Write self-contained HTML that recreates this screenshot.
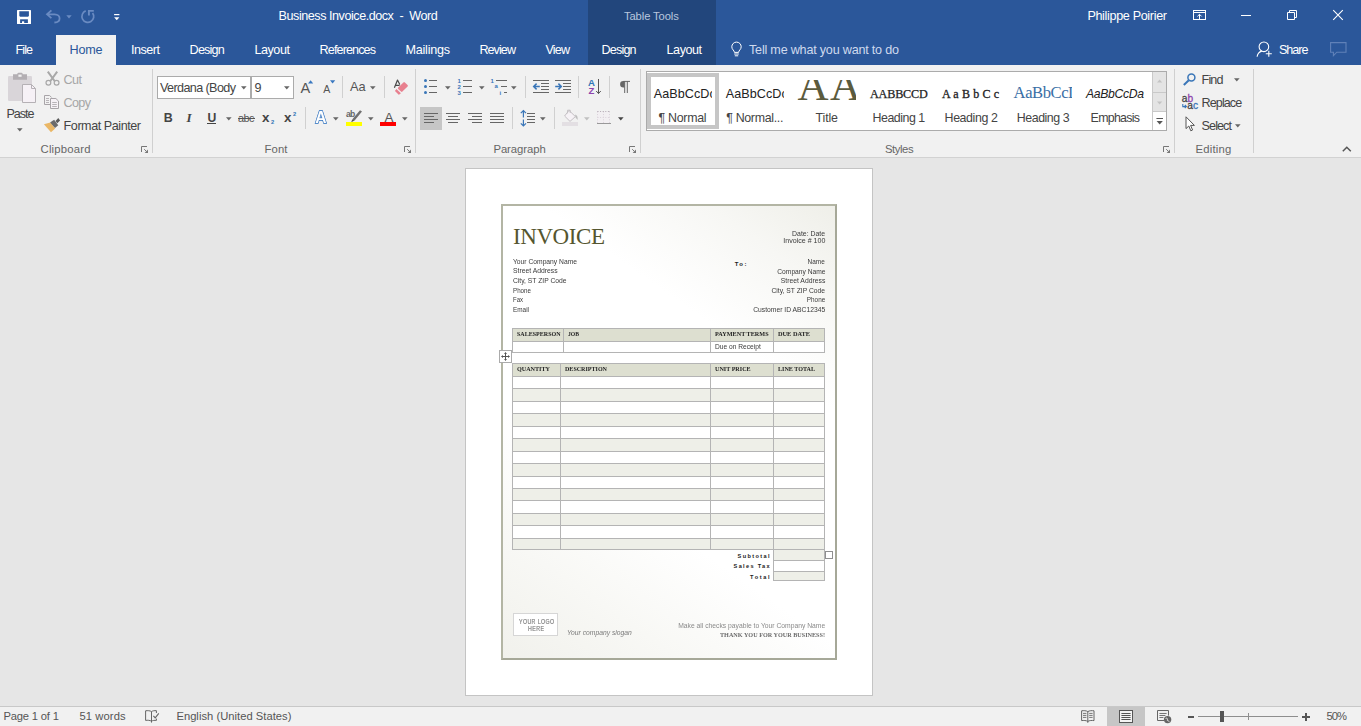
<!DOCTYPE html>
<html>
<head>
<meta charset="utf-8">
<title>Business Invoice.docx - Word</title>
<style>
*{box-sizing:border-box;margin:0;padding:0}
html,body{width:1361px;height:726px;overflow:hidden;background:#e6e6e6;font-family:"Liberation Sans",sans-serif;}
.abs{position:absolute}
#app{position:relative;width:1361px;height:726px;overflow:hidden;background:#e6e6e6}
#blue{position:absolute;left:0;top:0;width:1361px;height:65px;background:#2b579a}
#tt{position:absolute;left:588px;top:0;width:128px;height:65px;background:#22467c}
.t{position:absolute;white-space:nowrap;line-height:1}
.tw{color:#fff;font-size:12.6px}
#hometab{position:absolute;left:56px;top:35px;width:60px;height:31px;background:#f1f1f1}
#ribbon{position:absolute;left:0;top:65px;width:1361px;height:92px;background:#f1f1f1}
#ribline{position:absolute;left:0;top:157px;width:1361px;height:1px;background:#d2d2d2}
.sep{position:absolute;top:72px;width:1px;height:78px;background:#d5d5d5}
.rl{color:#444;font-size:12.2px}
.rg{color:#a0a0a0;font-size:12.2px}
.gl{color:#5a5a5a;font-size:11.6px}
svg{position:absolute;overflow:visible}
#status{position:absolute;left:0;top:706px;width:1361px;height:20px;background:#f1f1f1;border-top:1px solid #c8c8c8}
.st{color:#555;font-size:11.2px}
/* document */
#page{position:absolute;left:465px;top:168px;width:408px;height:528px;background:#fff;border:1px solid #c4c4c4}
#inv{position:absolute;left:501px;top:204px;width:336px;height:456px;border:2px solid #b3b5a4;border-right-color:#a6a898;border-bottom-color:#a6a898;background:linear-gradient(215deg,#efefe9 0%,#f7f7f4 13%,#ffffff 30%,#ffffff 64%,#f8f8f5 82%,#f1f1ec 100%)}
.v{position:absolute;white-space:nowrap;line-height:1;font-size:5.4px;color:#333;font-family:"Liberation Sans",sans-serif}
.vr{text-align:right}
.h{position:absolute;white-space:nowrap;line-height:1;font-size:4.6px;color:#222;font-family:"Liberation Serif",serif;font-weight:bold;letter-spacing:.1px}
</style>
</head>
<body>
<div id="app">
<div id="blue"></div>
<div id="tt"></div>
<div id="hometab"></div>
<div id="ribbon"></div>
<div id="ribline"></div>
<div class="t" style="left:278.60px;top:10.00px;letter-spacing:-0.464px;font-size:12.6px;color:#fff;white-space:pre">Business Invoice.docx  -  Word</div>
<div class="t" style="left:624.00px;top:11.00px;letter-spacing:-0.097px;font-size:11.2px;color:#b9c6de">Table Tools</div>
<div class="t" style="left:1087.40px;top:10.00px;letter-spacing:-0.340px;font-size:12.6px;color:#fff">Philippe Poirier</div>
<div class="t" style="left:15.60px;top:44.00px;letter-spacing:-0.966px;font-size:12.6px;color:#fff">File</div>
<div class="t" style="left:69.60px;top:44.00px;letter-spacing:-0.265px;font-size:12.6px;color:#2b579a">Home</div>
<div class="t" style="left:131.00px;top:44.00px;letter-spacing:-0.500px;font-size:12.6px;color:#fff">Insert</div>
<div class="t" style="left:189.60px;top:44.00px;letter-spacing:-0.801px;font-size:12.6px;color:#fff">Design</div>
<div class="t" style="left:254.40px;top:44.00px;letter-spacing:-0.443px;font-size:12.6px;color:#fff">Layout</div>
<div class="t" style="left:319.60px;top:44.00px;letter-spacing:-0.890px;font-size:12.6px;color:#fff">References</div>
<div class="t" style="left:405.60px;top:44.00px;letter-spacing:-0.258px;font-size:12.6px;color:#fff">Mailings</div>
<div class="t" style="left:479.40px;top:44.00px;letter-spacing:-0.939px;font-size:12.6px;color:#fff">Review</div>
<div class="t" style="left:545.40px;top:44.00px;letter-spacing:-0.826px;font-size:12.6px;color:#fff">View</div>
<div class="t" style="left:601.40px;top:44.00px;letter-spacing:-0.801px;font-size:12.6px;color:#fff">Design</div>
<div class="t" style="left:666.60px;top:44.00px;letter-spacing:-0.483px;font-size:12.6px;color:#fff">Layout</div>
<div class="t" style="left:749.00px;top:44.00px;letter-spacing:-0.208px;font-size:12.6px;color:#cfdaee">Tell me what you want to do</div>
<div class="t" style="left:1279.00px;top:44.00px;letter-spacing:-1.052px;font-size:12.6px;color:#fff">Share</div>

<!-- save -->
<svg style="left:17px;top:10px" width="14" height="14" viewBox="0 0 14 14"><rect x="0" y="0" width="14" height="14" rx="0.6" fill="#fff"/><path d="M2.3 1.3h9.6v4.6l-0.9 0.9h-7.8l-0.9 -0.9z" fill="#2b579a"/><rect x="3.1" y="9.3" width="7.8" height="3.7" fill="#2b579a"/><rect x="5" y="11.3" width="2.2" height="1.8" fill="#fff"/></svg>
<!-- undo -->
<svg style="left:45px;top:9px" width="16" height="15" viewBox="0 0 16 15"><path d="M6.4 1.3 L2 5.3 L6.4 9.2 M2.2 5.3 H9.6 C13 5.3 14.6 7.4 14.6 9.4 C14.6 11.8 12.2 13.3 9.4 13.5" fill="none" stroke="#6a8bc2" stroke-width="1.8"/></svg>
<svg style="left:66px;top:14.6px" width="6" height="4" viewBox="0 0 6 4"><path d="M0.3 0.3h5.4L3 3.4z" fill="#6a8bc2"/></svg>
<!-- redo -->
<svg style="left:81px;top:9px" width="14" height="15" viewBox="0 0 14 15"><path d="M11.6 3.9 A5.9 5.9 0 1 1 4.7 1.9" fill="none" stroke="#6a8bc2" stroke-width="1.7"/><path d="M12.8 1.9 H7.9 V6.6" fill="none" stroke="#6a8bc2" stroke-width="1.9"/></svg>
<!-- customize -->
<svg style="left:113.8px;top:13.8px" width="6" height="7" viewBox="0 0 6 7"><rect x="0.1" y="0" width="5.3" height="1.2" fill="#fff"/><path d="M0.1 3.2h5.3L2.75 6.3z" fill="#fff"/></svg>
<!-- ribbon display options -->
<svg style="left:1193px;top:10px" width="13" height="10" viewBox="0 0 13 10"><rect x="0.5" y="0.5" width="12" height="9" fill="none" stroke="#fff" stroke-width="1"/><path d="M0.5 2.5H12.5" stroke="#fff" stroke-width="1"/><path d="M6.5 4.4V9M4.4 6.4L6.5 4.3L8.6 6.4" fill="none" stroke="#fff" stroke-width="1"/></svg>
<!-- minimize -->
<div class="abs" style="left:1241px;top:15px;width:10px;height:1px;background:#fff"></div>
<!-- restore -->
<svg style="left:1287px;top:10px" width="10" height="10" viewBox="0 0 10 10"><path d="M0.5 2.5h7v7h-7z M2.5 2.5v-2h7v7h-2" fill="none" stroke="#fff" stroke-width="1"/></svg>
<!-- close -->
<svg style="left:1333px;top:10px" width="10" height="10" viewBox="0 0 10 10"><path d="M0.2 0.2L9.8 9.8M9.8 0.2L0.2 9.8" stroke="#fff" stroke-width="1.1" fill="none"/></svg>
<!-- bulb -->
<svg style="left:731px;top:42px" width="11" height="15" viewBox="0 0 11 15"><path d="M3.4 10.4 C3.4 8.4 0.8 7.6 0.8 4.8 A4.7 4.7 0 0 1 10.2 4.8 C10.2 7.6 7.6 8.4 7.6 10.4 Z" fill="none" stroke="#fff" stroke-width="1"/><path d="M3.2 12h4.6M3.8 13.8h3.4" stroke="#fff" stroke-width="1" fill="none"/></svg>
<!-- share -->
<svg style="left:1256px;top:41px" width="17" height="17" viewBox="0 0 17 17"><circle cx="7.9" cy="5.8" r="4.8" fill="none" stroke="#fff" stroke-width="1.1"/><path d="M1.1 15.8 C1.5 12.8 3.4 10.8 5.8 10.1" fill="none" stroke="#fff" stroke-width="1.1"/><path d="M9.8 12.7h6M12.8 9.7v6" stroke="#fff" stroke-width="1.1" fill="none"/></svg>
<!-- comment -->
<svg style="left:1330px;top:42px" width="17" height="15" viewBox="0 0 17 15"><path d="M0.6 0.6h15.4v9.6h-9.2l-3.4 3.4v-3.4h-2.8z" fill="none" stroke="#6081b8" stroke-width="1.1"/></svg>

<div class="abs" style="left:152px;top:69px;width:1px;height:84px;background:#d0d0d0"></div><div class="abs" style="left:415px;top:69px;width:1px;height:84px;background:#d0d0d0"></div><div class="abs" style="left:640px;top:69px;width:1px;height:84px;background:#d0d0d0"></div><div class="abs" style="left:1174px;top:69px;width:1px;height:84px;background:#d0d0d0"></div><div class="abs" style="left:1253px;top:69px;width:1px;height:84px;background:#d0d0d0"></div><div class="abs" style="left:342px;top:76px;width:1px;height:22px;background:#d0d0d0"></div><div class="abs" style="left:384px;top:76px;width:1px;height:22px;background:#d0d0d0"></div><div class="abs" style="left:305px;top:107px;width:1px;height:22px;background:#d0d0d0"></div><div class="abs" style="left:157px;top:76px;width:94px;height:23px;background:#fff;border:1px solid #ababab"></div><div class="abs" style="left:251px;top:76px;width:43px;height:23px;background:#fff;border:1px solid #ababab"></div>
<div class="t" style="left:6.50px;top:108.00px;letter-spacing:-1.080px;font-size:12.6px;color:#444">Paste</div>
<div class="t" style="left:63.60px;top:74.00px;letter-spacing:-0.605px;font-size:12.6px;color:#a6a6a6">Cut</div>
<div class="t" style="left:63.60px;top:97.00px;letter-spacing:-0.669px;font-size:12.6px;color:#a6a6a6">Copy</div>
<div class="t" style="left:63.60px;top:120.00px;letter-spacing:-0.454px;font-size:12.6px;color:#444">Format Painter</div>
<div class="t" style="left:40.50px;top:144.00px;letter-spacing:0.218px;font-size:11.3px;color:#666">Clipboard</div>
<div class="t" style="left:264.60px;top:144.00px;letter-spacing:0.064px;font-size:11.3px;color:#666">Font</div>
<div class="t" style="left:160.00px;top:82.00px;letter-spacing:-0.611px;font-size:12.6px;color:#444">Verdana (Body</div>
<div class="t" style="left:254.60px;top:82.00px;font-size:12.6px;color:#444">9</div>
<div class="t" style="left:300.40px;top:81.00px;font-size:14.6px;color:#555">A</div>
<div class="t" style="left:323.20px;top:84.00px;font-size:10.6px;color:#555">A</div>
<div class="t" style="left:350.00px;top:81.00px;letter-spacing:-0.056px;font-size:12.8px;color:#555">Aa</div>
<div class="t" style="left:163.80px;top:112.00px;font-size:12.4px;color:#444;font-weight:bold">B</div>
<div class="t" style="left:186.60px;top:111.00px;font-size:13px;color:#444;font-family:'Liberation Serif',serif;font-weight:bold;font-style:italic">I</div>
<div class="t" style="left:207.40px;top:112.00px;font-size:12.2px;color:#444;font-weight:bold">U</div>
<div class="t" style="left:238.00px;top:113.00px;letter-spacing:-0.511px;font-size:10.8px;color:#555">abc</div>
<div class="t" style="left:262.00px;top:111.00px;font-size:13.4px;color:#444;font-weight:bold">x</div>
<div class="t" style="left:284.00px;top:111.00px;font-size:13.4px;color:#444;font-weight:bold">x</div>
<div class="t" style="left:271.00px;top:120.00px;font-size:5.8px;color:#2e75b6;font-weight:bold">2</div>
<div class="t" style="left:293.00px;top:112.00px;font-size:5.8px;color:#2e75b6;font-weight:bold">2</div>
<div class="t" style="left:384.40px;top:111.00px;font-size:13.4px;color:#555">A</div>
<div class="t" style="left:346.00px;top:110.00px;letter-spacing:-0.831px;font-size:8.6px;color:#666;font-weight:bold">ab</div>
<svg style="left:8px;top:73px" width="29" height="30" viewBox="0 0 29 30"><rect x="0" y="3" width="24" height="25" rx="1.2" fill="#d9d5d9"/><path d="M5 1.2h4.2c0-0.8 0.8-1.4 1.8-1.4h2c1 0 1.8 0.6 1.8 1.4H19v5.6H5z" fill="#b3afb3"/><rect x="10.4" y="1.6" width="3.2" height="2.2" fill="#f1f1f1"/><path d="M14.5 11.5h9l4 4v14h-13z" fill="#f6f1f6" stroke="#b5b1b5" stroke-width="1"/><path d="M23.5 11.5v4h4" fill="none" stroke="#b5b1b5" stroke-width="1"/></svg><svg style="left:17px;top:128px" width="6" height="4" viewBox="0 0 6 4"><path d="M0 0.2h5.6L2.8 3.4z" fill="#666"/></svg><svg style="left:45px;top:71px" width="15" height="15" viewBox="0 0 15 15"><path d="M2.8 0.6L9.6 10M12.2 0.6L5.4 10" stroke="#a8a8a8" stroke-width="2" fill="none"/><circle cx="3.4" cy="11.8" r="2.4" fill="none" stroke="#a8a8a8" stroke-width="1.2"/><circle cx="11.6" cy="11.8" r="2.4" fill="none" stroke="#a8a8a8" stroke-width="1.2"/></svg><svg style="left:44px;top:95px" width="16" height="14" viewBox="0 0 16 14"><path d="M6 9.5H0.5V0.5H5.6L7.6 2.5" fill="none" stroke="#a8a4a8" stroke-width="1"/><path d="M2 3.5h3M2 5.5h3M2 7.5h3" stroke="#b8b4b8" stroke-width="1"/><path d="M6.5 3.5h5.4l2.6 2.6v7.4h-8z" fill="#f6f1f6" stroke="#a8a4a8" stroke-width="1"/><path d="M8.2 7.5h4.6M8.2 9.5h4.6M8.2 11.5h4.6" stroke="#b8b4b8" stroke-width="1"/></svg><svg style="left:40px;top:68px" width="24" height="68" viewBox="0 0 24 68"><path d="M3.9 56.2L10.3 54.6L15.2 60.6L11 64.3z" fill="#eab766"/><path d="M10.1 54.4L14.1 51.7L18.3 57.2L15 60z" fill="#6b6b6b"/><path d="M15.5 53L18.3 50.1L20.1 52.5L17.3 55.3z" fill="#5a5a5a"/></svg><svg style="left:141px;top:146px" width="8" height="8" viewBox="0 0 8 8"><path d="M0.5 6V0.5H6" fill="none" stroke="#777" stroke-width="1"/><path d="M7 3.6V7H3.6z" fill="#777"/><path d="M3.2 3.2L5.4 5.4" stroke="#777" stroke-width="1" fill="none"/></svg><svg style="left:404px;top:146px" width="8" height="8" viewBox="0 0 8 8"><path d="M0.5 6V0.5H6" fill="none" stroke="#777" stroke-width="1"/><path d="M7 3.6V7H3.6z" fill="#777"/><path d="M3.2 3.2L5.4 5.4" stroke="#777" stroke-width="1" fill="none"/></svg><svg style="left:241px;top:86px" width="6" height="4" viewBox="0 0 6 4"><path d="M0 0.2h5.6L2.8 3.4z" fill="#666"/></svg><svg style="left:284.4px;top:86px" width="6" height="4" viewBox="0 0 6 4"><path d="M0 0.2h5.6L2.8 3.4z" fill="#666"/></svg><svg style="left:308px;top:80px" width="6" height="4" viewBox="0 0 6 4"><path d="M0 3.4h5.2L2.6 0.2z" fill="#3a78c0"/></svg><svg style="left:330px;top:80px" width="6" height="4" viewBox="0 0 6 4"><path d="M0 0.2h5.2L2.6 3.4z" fill="#3a78c0"/></svg><svg style="left:370px;top:86px" width="6" height="4" viewBox="0 0 6 4"><path d="M0 0.2h5.6L2.8 3.4z" fill="#666"/></svg><svg style="left:386px;top:74px" width="28" height="26" viewBox="0 0 28 26"><path d="M8.4 13.8L11.5 6L13.8 10.6M9.6 11.4H13.6" fill="none" stroke="#4a4a4a" stroke-width="1.2" stroke-linejoin="round"/><path d="M12.2 13.6L17.4 8.4Q18.1 7.8 18.8 8.4L21.6 11Q22.2 11.7 21.6 12.4L16.4 17.6Q15.7 18.2 15 17.6L12.2 15Q11.6 14.3 12.2 13.6z" fill="#e8808f"/><path d="M10.4 15L14.9 19.3L13.3 20.6Q12.9 20.9 12.5 20.5L9.2 17.2Q8.9 16.8 9.2 16.4z" fill="#e8808f"/></svg><div class="abs" style="left:207px;top:123px;width:9px;height:1px;background:#444"></div><svg style="left:226px;top:117px" width="6" height="4" viewBox="0 0 6 4"><path d="M0 0.2h5.6L2.8 3.4z" fill="#666"/></svg><div class="abs" style="left:238px;top:118px;width:17px;height:1px;background:#555"></div><div class="t" style="left:315.2px;top:110px;font-size:15.6px;font-weight:bold;color:#fff;-webkit-text-stroke:1.3px #3a78c0;paint-order:stroke fill;filter:drop-shadow(0 0 0.7px #9dbfe6)">A</div><svg style="left:333px;top:117px" width="6" height="4" viewBox="0 0 6 4"><path d="M0 0.2h5.6L2.8 3.4z" fill="#666"/></svg><svg style="left:346px;top:110px" width="17" height="17" viewBox="0 0 17 17"><path d="M16 1.6L8.6 10.4L6 11.8L6.6 9L14 0.2z" fill="#707070"/><path d="M6.4 9.4L5 11.9L8 10.8z" fill="#555"/><rect x="0" y="12" width="16" height="4" fill="#ffff00"/></svg><svg style="left:368px;top:117px" width="6" height="4" viewBox="0 0 6 4"><path d="M0 0.2h5.6L2.8 3.4z" fill="#666"/></svg><div class="abs" style="left:380px;top:122px;width:16px;height:4px;background:#fe0000"></div><svg style="left:402px;top:117px" width="6" height="4" viewBox="0 0 6 4"><path d="M0 0.2h5.6L2.8 3.4z" fill="#666"/></svg>
<div class="abs" style="left:420px;top:107px;width:22px;height:23px;background:#c6c6c6"></div>
<div class="t" style="left:493.40px;top:144.00px;letter-spacing:-0.046px;font-size:11.3px;color:#666">Paragraph</div>
<div class="t" style="left:588.00px;top:78.00px;font-size:9.6px;color:#2e75b6;font-weight:bold">A</div>
<div class="t" style="left:588.40px;top:86.00px;font-size:9.6px;color:#8e44ad;font-weight:bold">Z</div>
<div class="abs" style="left:525px;top:76px;width:1px;height:22px;background:#d0d0d0"></div><div class="abs" style="left:578px;top:76px;width:1px;height:22px;background:#d0d0d0"></div><div class="abs" style="left:609px;top:76px;width:1px;height:22px;background:#d0d0d0"></div><div class="abs" style="left:512px;top:107px;width:1px;height:22px;background:#d0d0d0"></div><div class="abs" style="left:554px;top:107px;width:1px;height:22px;background:#d0d0d0"></div><div class="abs" style="left:424px;top:79px;width:3px;height:3px;border-radius:1.5px;background:#3a76b8"></div><div class="abs" style="left:429px;top:80px;width:8px;height:1px;background:#666"></div><div class="abs" style="left:424px;top:85px;width:3px;height:3px;border-radius:1.5px;background:#3a76b8"></div><div class="abs" style="left:429px;top:86px;width:8px;height:1px;background:#666"></div><div class="abs" style="left:424px;top:91px;width:3px;height:3px;border-radius:1.5px;background:#3a76b8"></div><div class="abs" style="left:429px;top:92px;width:8px;height:1px;background:#666"></div><svg style="left:445px;top:86px" width="6" height="4" viewBox="0 0 6 4"><path d="M0 0.2h5.6L2.8 3.4z" fill="#666"/></svg><div class="t" style="left:457.6px;top:77.8px;font-size:6px;font-weight:bold;color:#3a76b8">1</div><div class="abs" style="left:463px;top:80px;width:9px;height:1px;background:#666"></div><div class="t" style="left:457.6px;top:83.8px;font-size:6px;font-weight:bold;color:#3a76b8">2</div><div class="abs" style="left:463px;top:86px;width:9px;height:1px;background:#666"></div><div class="t" style="left:457.6px;top:89.8px;font-size:6px;font-weight:bold;color:#3a76b8">3</div><div class="abs" style="left:463px;top:92px;width:9px;height:1px;background:#666"></div><svg style="left:479px;top:86px" width="6" height="4" viewBox="0 0 6 4"><path d="M0 0.2h5.6L2.8 3.4z" fill="#666"/></svg><div class="t" style="left:490.6px;top:77.8px;font-size:6px;font-weight:bold;color:#3a76b8">1</div><div class="abs" style="left:496px;top:80px;width:11px;height:1px;background:#666"></div><div class="t" style="left:494.6px;top:83.4px;font-size:6px;font-weight:bold;color:#3a76b8">a</div><div class="abs" style="left:501px;top:86px;width:6px;height:1px;background:#666"></div><div class="t" style="left:499.6px;top:89.6px;font-size:6px;font-weight:bold;color:#3a76b8">i</div><div class="abs" style="left:504px;top:92px;width:3px;height:1px;background:#666"></div><svg style="left:511px;top:86px" width="6" height="4" viewBox="0 0 6 4"><path d="M0 0.2h5.6L2.8 3.4z" fill="#666"/></svg><div class="abs" style="left:533px;top:80px;width:16px;height:1px;background:#666"></div><div class="abs" style="left:533px;top:92px;width:16px;height:1px;background:#666"></div><div class="abs" style="left:541px;top:83px;width:8px;height:1px;background:#666"></div><div class="abs" style="left:541px;top:86px;width:8px;height:1px;background:#666"></div><div class="abs" style="left:541px;top:89px;width:8px;height:1px;background:#666"></div><svg style="left:533px;top:83px" width="7" height="7" viewBox="0 0 7 7"><path d="M6.8 3.5H1.2M3.6 0.6L0.7 3.5L3.6 6.4" fill="none" stroke="#3a76b8" stroke-width="1.5"/></svg><div class="abs" style="left:555px;top:80px;width:16px;height:1px;background:#666"></div><div class="abs" style="left:555px;top:92px;width:16px;height:1px;background:#666"></div><div class="abs" style="left:563px;top:83px;width:8px;height:1px;background:#666"></div><div class="abs" style="left:563px;top:86px;width:8px;height:1px;background:#666"></div><div class="abs" style="left:563px;top:89px;width:8px;height:1px;background:#666"></div><svg style="left:555px;top:83px" width="7" height="7" viewBox="0 0 7 7"><path d="M0.2 3.5H5.8M3.4 0.6L6.3 3.5L3.4 6.4" fill="none" stroke="#3a76b8" stroke-width="1.5"/></svg><svg style="left:596px;top:79px" width="6" height="16" viewBox="0 0 6 16"><path d="M2.5 0V14.6M0.2 12L2.5 14.6L4.8 12" fill="none" stroke="#555" stroke-width="1"/></svg><svg style="left:619px;top:80px" width="12" height="14" viewBox="0 0 12 14"><path d="M5.6 1H4.4A3.3 3.3 0 0 0 4.4 7.6H5.6z" fill="#666"/><path d="M5.7 1V13M8.3 1V13M4.4 1.4H11" stroke="#666" stroke-width="1" fill="none"/></svg><div class="abs" style="left:424px;top:113px;width:14px;height:1px;background:#666"></div><div class="abs" style="left:424px;top:116px;width:10px;height:1px;background:#666"></div><div class="abs" style="left:424px;top:119px;width:14px;height:1px;background:#666"></div><div class="abs" style="left:424px;top:122px;width:10px;height:1px;background:#666"></div><div class="abs" style="left:446px;top:113px;width:14px;height:1px;background:#666"></div><div class="abs" style="left:448px;top:116px;width:10px;height:1px;background:#666"></div><div class="abs" style="left:446px;top:119px;width:14px;height:1px;background:#666"></div><div class="abs" style="left:448px;top:122px;width:10px;height:1px;background:#666"></div><div class="abs" style="left:468px;top:113px;width:14px;height:1px;background:#666"></div><div class="abs" style="left:472px;top:116px;width:10px;height:1px;background:#666"></div><div class="abs" style="left:468px;top:119px;width:14px;height:1px;background:#666"></div><div class="abs" style="left:472px;top:122px;width:10px;height:1px;background:#666"></div><div class="abs" style="left:490px;top:113px;width:14px;height:1px;background:#666"></div><div class="abs" style="left:490px;top:116px;width:14px;height:1px;background:#666"></div><div class="abs" style="left:490px;top:119px;width:14px;height:1px;background:#666"></div><div class="abs" style="left:490px;top:122px;width:14px;height:1px;background:#666"></div><svg style="left:520px;top:110px" width="7" height="17" viewBox="0 0 7 17"><path d="M3.4 0.6V7.4M0.8 3.2L3.4 0.6L6 3.2M3.4 9.4V16M0.8 13.4L3.4 16L6 13.4" fill="none" stroke="#3a76b8" stroke-width="1.2"/></svg><div class="abs" style="left:527px;top:113px;width:8px;height:1px;background:#666"></div><div class="abs" style="left:527px;top:116px;width:8px;height:1px;background:#666"></div><div class="abs" style="left:527px;top:119px;width:8px;height:1px;background:#666"></div><div class="abs" style="left:527px;top:122px;width:8px;height:1px;background:#666"></div><svg style="left:540px;top:117px" width="6" height="4" viewBox="0 0 6 4"><path d="M0 0.2h5.6L2.8 3.4z" fill="#666"/></svg><svg style="left:562px;top:109px" width="17" height="18" viewBox="0 0 17 18"><path d="M7 1.4L13.4 7.6L8 12.4L2.6 7z" fill="#f6f2f6" stroke="#c4c0c4" stroke-width="1"/><path d="M5.6 4.4V1.2h2.6V4" fill="none" stroke="#c4c0c4" stroke-width="1"/><path d="M13 5.6C15.4 6.4 16 8.6 15.6 11L13.6 8.4z" fill="#bdbdbd"/><rect x="0" y="13" width="16" height="4" fill="#e3dfe3"/></svg><svg style="left:584px;top:117px" width="6" height="4" viewBox="0 0 6 4"><path d="M0 0.2h5.6L2.8 3.4z" fill="#c0c0c0"/></svg><svg style="left:597px;top:111px" width="14" height="14" viewBox="0 0 14 14"><path d="M0.5 0.5H13.5M0.5 6.5H13.5" stroke="#b4a8b4" stroke-width="1" stroke-dasharray="1 1.6" fill="none"/><path d="M0.5 0.5V12M6.5 0.5V12M12.5 0.5V12" stroke="#b4a8b4" stroke-width="1" stroke-dasharray="1 1.6" fill="none"/><rect x="0" y="1" width="13" height="11" fill="#f4eff4" opacity="0.6"/><rect x="0" y="12" width="14" height="1" fill="#999"/></svg><svg style="left:618px;top:117px" width="6" height="4" viewBox="0 0 6 4"><path d="M0 0.2h5.6L2.8 3.4z" fill="#444"/></svg><svg style="left:629px;top:146px" width="8" height="8" viewBox="0 0 8 8"><path d="M0.5 6V0.5H6" fill="none" stroke="#777" stroke-width="1"/><path d="M7 3.6V7H3.6z" fill="#777"/><path d="M3.2 3.2L5.4 5.4" stroke="#777" stroke-width="1" fill="none"/></svg>
<div class="abs" style="left:646px;top:71px;width:521px;height:60px;background:#fff;border:1px solid #ababab"></div><div class="abs" style="left:647px;top:73px;width:72px;height:56px;border:4px solid #c6c6c6;background:#fff"></div><div class="abs" style="left:1152px;top:72px;width:14px;height:58px;background:#fff;border-left:1px solid #c9c9c9"></div><div class="abs" style="left:1153px;top:72px;width:13px;height:20px;background:#e4e4e4"></div><div class="abs" style="left:1153px;top:93px;width:13px;height:18px;background:#e4e4e4"></div><div class="abs" style="left:1153px;top:92px;width:13px;height:1px;background:#c9c9c9"></div><div class="abs" style="left:1153px;top:111px;width:13px;height:1px;background:#c9c9c9"></div><div class="abs" style="left:651px;top:78px;width:61px;height:24px;overflow:hidden"><div class="t" style="left:2.8px;top:10px;font-size:12.6px;color:#222;letter-spacing:0.05px">AaBbCcDcEe</div></div><div class="abs" style="left:720px;top:78px;width:64px;height:24px;overflow:hidden"><div class="t" style="left:5.8px;top:10px;font-size:12.6px;color:#222;letter-spacing:0.05px">AaBbCcDcEe</div></div><div class="abs" style="left:797px;top:80px;width:59px;height:22px;overflow:hidden"><div class="t" style="left:0.4px;top:-16px;font-size:43px;color:#5b5b3e;font-family:'Liberation Serif',serif;letter-spacing:1.6px">AAB</div></div><div class="abs" style="left:1008px;top:78px;width:64px;height:26px;overflow:hidden"><div class="t" style="left:5.6px;top:7px;font-size:16.6px;color:#3a6ea5;font-family:'Liberation Serif',serif;letter-spacing:-0.45px">AaBbCcDd</div></div>
<div class="t" style="left:885.00px;top:144.00px;letter-spacing:-0.433px;font-size:11.3px;color:#666">Styles</div>
<div class="t" style="left:1195.40px;top:144.00px;letter-spacing:0.242px;font-size:11.3px;color:#666">Editing</div>
<div class="t" style="left:1201.60px;top:74.00px;letter-spacing:-0.900px;font-size:12.6px;color:#444">Find</div>
<div class="t" style="left:1201.60px;top:97.00px;letter-spacing:-0.936px;font-size:12.6px;color:#444">Replace</div>
<div class="t" style="left:1201.60px;top:120.00px;letter-spacing:-0.923px;font-size:12.6px;color:#444">Select</div>
<div class="t" style="left:658.40px;top:112.00px;letter-spacing:-0.262px;font-size:12.4px;color:#444">¶ Normal</div>
<div class="t" style="left:726.20px;top:112.00px;letter-spacing:-0.316px;font-size:12.4px;color:#444">¶ Normal...</div>
<div class="t" style="left:815.60px;top:112.00px;letter-spacing:-0.138px;font-size:12.4px;color:#444">Title</div>
<div class="t" style="left:872.60px;top:112.00px;letter-spacing:-0.487px;font-size:12.4px;color:#444">Heading 1</div>
<div class="t" style="left:944.60px;top:112.00px;letter-spacing:-0.413px;font-size:12.4px;color:#444">Heading 2</div>
<div class="t" style="left:1016.80px;top:112.00px;letter-spacing:-0.463px;font-size:12.4px;color:#444">Heading 3</div>
<div class="t" style="left:1090.60px;top:112.00px;letter-spacing:-0.715px;font-size:12.4px;color:#444">Emphasis</div>
<div class="t" style="left:870.00px;top:88.00px;letter-spacing:-0.187px;font-size:12.2px;color:#222;font-family:'Liberation Serif',serif;-webkit-text-stroke:0.25px #222">AABBCCD</div>
<div class="t" style="left:942.00px;top:88.00px;letter-spacing:0.153px;font-size:12px;color:#222;font-family:'Liberation Serif',serif;-webkit-text-stroke:0.3px #222">A a B b C c</div>
<div class="t" style="left:1086.00px;top:88.00px;letter-spacing:-0.328px;font-size:12.2px;color:#222;font-style:italic">AaBbCcDa</div>
<svg style="left:1157px;top:79px" width="6" height="4" viewBox="0 0 6 4"><path d="M0 3.4h5.2L2.6 0.4z" fill="#c4c4c4"/></svg><svg style="left:1157px;top:101px" width="6" height="4" viewBox="0 0 6 4"><path d="M0 0.4h5.2L2.6 3.4z" fill="#c4c4c4"/></svg><svg style="left:1156px;top:118px" width="8" height="8" viewBox="0 0 8 8"><rect x="0.4" y="0" width="6.6" height="1" fill="#555"/><path d="M0.6 3h6.2L3.7 6.4z" fill="#555"/></svg><svg style="left:1163px;top:146px" width="8" height="8" viewBox="0 0 8 8"><path d="M0.5 6V0.5H6" fill="none" stroke="#777" stroke-width="1"/><path d="M7 3.6V7H3.6z" fill="#777"/><path d="M3.2 3.2L5.4 5.4" stroke="#777" stroke-width="1" fill="none"/></svg><svg style="left:1183px;top:73px" width="14" height="13" viewBox="0 0 14 13"><circle cx="8.4" cy="4.4" r="3.5" fill="none" stroke="#3a76b8" stroke-width="1.5"/><path d="M5.8 7.2L0.8 12" stroke="#3a76b8" stroke-width="2" fill="none"/></svg><svg style="left:1233.8px;top:78.4px" width="6" height="4" viewBox="0 0 6 4"><path d="M0 0.2h5.6L2.8 3.4z" fill="#666"/></svg><div class="t" style="left:1181.8px;top:94px;font-size:10.2px;color:#444;letter-spacing:0.1px;-webkit-text-stroke:0.3px">a<span style="color:#8e44ad">b</span></div><div class="t" style="left:1187.2px;top:101px;font-size:10.2px;color:#444;letter-spacing:0.1px;-webkit-text-stroke:0.3px">a<span style="color:#3a76b8">c</span></div><svg style="left:1181.6px;top:103.6px" width="5" height="5" viewBox="0 0 5 5"><path d="M0.8 0V2.6H4.2M2.8 1L4.4 2.6L2.8 4.2" fill="none" stroke="#3a76b8" stroke-width="1.1"/></svg><svg style="left:1185px;top:116px" width="11" height="16" viewBox="0 0 11 16"><path d="M1 0.8V12.6L3.8 10L5.8 14.8L7.6 14L5.6 9.4H9.4z" fill="#fff" stroke="#555" stroke-width="1"/></svg><svg style="left:1234.8px;top:123.8px" width="6" height="4" viewBox="0 0 6 4"><path d="M0 0.2h5.6L2.8 3.4z" fill="#666"/></svg><svg style="left:1342px;top:146px" width="10" height="6" viewBox="0 0 10 6"><path d="M0.8 5.2L4.8 1.2L8.8 5.2" fill="none" stroke="#555" stroke-width="1.5"/></svg>
<div id="page"></div>
<div id="inv"></div>
<div class="abs" style="left:512px;top:328px;width:313px;height:25px;background:#b4b4b4"></div><div class="abs" style="left:513px;top:329px;width:50px;height:12px;background:#dddfd0"></div><div class="abs" style="left:513px;top:342px;width:50px;height:10px;background:#fff"></div><div class="abs" style="left:564px;top:329px;width:146px;height:12px;background:#dddfd0"></div><div class="abs" style="left:564px;top:342px;width:146px;height:10px;background:#fff"></div><div class="abs" style="left:711px;top:329px;width:62px;height:12px;background:#dddfd0"></div><div class="abs" style="left:711px;top:342px;width:62px;height:10px;background:#fff"></div><div class="abs" style="left:774px;top:329px;width:50px;height:12px;background:#dddfd0"></div><div class="abs" style="left:774px;top:342px;width:50px;height:10px;background:#fff"></div><div class="abs" style="left:512px;top:363px;width:313px;height:187px;background:#b4b4b4"></div><div class="abs" style="left:513px;top:364px;width:47px;height:12px;background:#dddfd0"></div><div class="abs" style="left:561px;top:364px;width:149px;height:12px;background:#dddfd0"></div><div class="abs" style="left:711px;top:364px;width:62px;height:12px;background:#dddfd0"></div><div class="abs" style="left:774px;top:364px;width:50px;height:12px;background:#dddfd0"></div><div class="abs" style="left:513px;top:377px;width:47px;height:11px;background:#fff"></div><div class="abs" style="left:561px;top:377px;width:149px;height:11px;background:#fff"></div><div class="abs" style="left:711px;top:377px;width:62px;height:11px;background:#fff"></div><div class="abs" style="left:774px;top:377px;width:50px;height:11px;background:#fff"></div><div class="abs" style="left:513px;top:389px;width:47px;height:12px;background:#eeefe8"></div><div class="abs" style="left:561px;top:389px;width:149px;height:12px;background:#eeefe8"></div><div class="abs" style="left:711px;top:389px;width:62px;height:12px;background:#eeefe8"></div><div class="abs" style="left:774px;top:389px;width:50px;height:12px;background:#eeefe8"></div><div class="abs" style="left:513px;top:402px;width:47px;height:11px;background:#fff"></div><div class="abs" style="left:561px;top:402px;width:149px;height:11px;background:#fff"></div><div class="abs" style="left:711px;top:402px;width:62px;height:11px;background:#fff"></div><div class="abs" style="left:774px;top:402px;width:50px;height:11px;background:#fff"></div><div class="abs" style="left:513px;top:414px;width:47px;height:12px;background:#eeefe8"></div><div class="abs" style="left:561px;top:414px;width:149px;height:12px;background:#eeefe8"></div><div class="abs" style="left:711px;top:414px;width:62px;height:12px;background:#eeefe8"></div><div class="abs" style="left:774px;top:414px;width:50px;height:12px;background:#eeefe8"></div><div class="abs" style="left:513px;top:427px;width:47px;height:11px;background:#fff"></div><div class="abs" style="left:561px;top:427px;width:149px;height:11px;background:#fff"></div><div class="abs" style="left:711px;top:427px;width:62px;height:11px;background:#fff"></div><div class="abs" style="left:774px;top:427px;width:50px;height:11px;background:#fff"></div><div class="abs" style="left:513px;top:439px;width:47px;height:12px;background:#eeefe8"></div><div class="abs" style="left:561px;top:439px;width:149px;height:12px;background:#eeefe8"></div><div class="abs" style="left:711px;top:439px;width:62px;height:12px;background:#eeefe8"></div><div class="abs" style="left:774px;top:439px;width:50px;height:12px;background:#eeefe8"></div><div class="abs" style="left:513px;top:452px;width:47px;height:11px;background:#fff"></div><div class="abs" style="left:561px;top:452px;width:149px;height:11px;background:#fff"></div><div class="abs" style="left:711px;top:452px;width:62px;height:11px;background:#fff"></div><div class="abs" style="left:774px;top:452px;width:50px;height:11px;background:#fff"></div><div class="abs" style="left:513px;top:464px;width:47px;height:12px;background:#eeefe8"></div><div class="abs" style="left:561px;top:464px;width:149px;height:12px;background:#eeefe8"></div><div class="abs" style="left:711px;top:464px;width:62px;height:12px;background:#eeefe8"></div><div class="abs" style="left:774px;top:464px;width:50px;height:12px;background:#eeefe8"></div><div class="abs" style="left:513px;top:477px;width:47px;height:11px;background:#fff"></div><div class="abs" style="left:561px;top:477px;width:149px;height:11px;background:#fff"></div><div class="abs" style="left:711px;top:477px;width:62px;height:11px;background:#fff"></div><div class="abs" style="left:774px;top:477px;width:50px;height:11px;background:#fff"></div><div class="abs" style="left:513px;top:489px;width:47px;height:11px;background:#eeefe8"></div><div class="abs" style="left:561px;top:489px;width:149px;height:11px;background:#eeefe8"></div><div class="abs" style="left:711px;top:489px;width:62px;height:11px;background:#eeefe8"></div><div class="abs" style="left:774px;top:489px;width:50px;height:11px;background:#eeefe8"></div><div class="abs" style="left:513px;top:501px;width:47px;height:12px;background:#fff"></div><div class="abs" style="left:561px;top:501px;width:149px;height:12px;background:#fff"></div><div class="abs" style="left:711px;top:501px;width:62px;height:12px;background:#fff"></div><div class="abs" style="left:774px;top:501px;width:50px;height:12px;background:#fff"></div><div class="abs" style="left:513px;top:514px;width:47px;height:11px;background:#eeefe8"></div><div class="abs" style="left:561px;top:514px;width:149px;height:11px;background:#eeefe8"></div><div class="abs" style="left:711px;top:514px;width:62px;height:11px;background:#eeefe8"></div><div class="abs" style="left:774px;top:514px;width:50px;height:11px;background:#eeefe8"></div><div class="abs" style="left:513px;top:526px;width:47px;height:12px;background:#fff"></div><div class="abs" style="left:561px;top:526px;width:149px;height:12px;background:#fff"></div><div class="abs" style="left:711px;top:526px;width:62px;height:12px;background:#fff"></div><div class="abs" style="left:774px;top:526px;width:50px;height:12px;background:#fff"></div><div class="abs" style="left:513px;top:539px;width:47px;height:10px;background:#eeefe8"></div><div class="abs" style="left:561px;top:539px;width:149px;height:10px;background:#eeefe8"></div><div class="abs" style="left:711px;top:539px;width:62px;height:10px;background:#eeefe8"></div><div class="abs" style="left:774px;top:539px;width:50px;height:10px;background:#eeefe8"></div><div class="abs" style="left:773px;top:549px;width:52px;height:32px;background:#b4b4b4"></div><div class="abs" style="left:774px;top:550px;width:50px;height:10px;background:#eeefe8"></div><div class="abs" style="left:774px;top:561px;width:50px;height:10px;background:#fff"></div><div class="abs" style="left:774px;top:572px;width:50px;height:8px;background:#eeefe8"></div><div class="abs" style="left:513px;top:613px;width:45px;height:23px;background:#fff;border:1px solid #d6d6d6"></div><div class="abs" style="left:499px;top:350px;width:13px;height:13px;background:#fff;border:1px solid #ababab"></div><svg style="left:501px;top:352px" width="9" height="9" viewBox="0 0 9 9"><path d="M4.5 0.6V8.4M0.6 4.5H8.4" stroke="#555" stroke-width="1" fill="none"/><path d="M3 2L4.5 0.2L6 2zM3 7L4.5 8.8L6 7zM2 3L0.2 4.5L2 6zM7 3L8.8 4.5L7 6z" fill="#555"/></svg><div class="abs" style="left:825px;top:551px;width:8px;height:8px;background:#fff;border:1px solid #8f8f8f"></div>
<div class="t" style="left:513.00px;top:225.00px;letter-spacing:-0.424px;font-size:23px;color:#55562f;font-family:'Liberation Serif',serif">INVOICE</div>
<div class="t" style="left:513.00px;top:258.67px;transform:scaleX(1.0672);transform-origin:0 0;font-size:6.3px;color:#3a3a3a">Your Company Name</div>
<div class="t" style="left:513.00px;top:267.67px;transform:scaleX(1.0796);transform-origin:0 0;font-size:6.3px;color:#3a3a3a">Street Address</div>
<div class="t" style="left:513.00px;top:277.67px;transform:scaleX(1.0710);transform-origin:0 0;font-size:6.3px;color:#3a3a3a">City, ST ZIP Code</div>
<div class="t" style="left:513.00px;top:287.67px;transform:scaleX(0.9880);transform-origin:0 0;font-size:6.3px;color:#3a3a3a">Phone</div>
<div class="t" style="left:513.00px;top:296.67px;transform:scaleX(0.9524);transform-origin:0 0;font-size:6.3px;color:#3a3a3a">Fax</div>
<div class="t" style="left:513.00px;top:306.67px;transform:scaleX(1.0159);transform-origin:0 0;font-size:6.3px;color:#3a3a3a">Email</div>
<div class="t" style="right:536.00px;top:230.67px;transform:scaleX(1.0960);transform-origin:100% 0;font-size:6.3px;color:#3a3a3a">Date: Date</div>
<div class="t" style="right:536.00px;top:237.67px;transform:scaleX(1.1263);transform-origin:100% 0;font-size:6.3px;color:#3a3a3a">Invoice # 100</div>
<div class="t" style="left:734.80px;top:261.00px;letter-spacing:1.355px;font-size:6px;color:#222;font-weight:bold">To:</div>
<div class="t" style="right:536.00px;top:258.67px;transform:scaleX(1.0240);transform-origin:100% 0;font-size:6.3px;color:#3a3a3a">Name</div>
<div class="t" style="right:536.00px;top:268.67px;transform:scaleX(1.0593);transform-origin:100% 0;font-size:6.3px;color:#3a3a3a">Company Name</div>
<div class="t" style="right:536.00px;top:277.67px;transform:scaleX(1.0796);transform-origin:100% 0;font-size:6.3px;color:#3a3a3a">Street Address</div>
<div class="t" style="right:536.00px;top:287.67px;transform:scaleX(1.0710);transform-origin:100% 0;font-size:6.3px;color:#3a3a3a">City, ST ZIP Code</div>
<div class="t" style="right:536.00px;top:296.67px;transform:scaleX(1.0099);transform-origin:100% 0;font-size:6.3px;color:#3a3a3a">Phone</div>
<div class="t" style="right:536.00px;top:306.67px;transform:scaleX(1.0714);transform-origin:100% 0;font-size:6.3px;color:#3a3a3a">Customer ID ABC12345</div>
<div class="t" style="left:517.00px;top:330.98px;transform:scaleX(1.0055);transform-origin:0 0;font-size:6px;color:#222;font-family:'Liberation Serif',serif;font-weight:bold">SALESPERSON</div>
<div class="t" style="left:568.00px;top:330.98px;transform:scaleX(0.9424);transform-origin:0 0;font-size:6px;color:#222;font-family:'Liberation Serif',serif;font-weight:bold">JOB</div>
<div class="t" style="left:715.00px;top:330.98px;transform:scaleX(1.0314);transform-origin:0 0;font-size:6px;color:#222;font-family:'Liberation Serif',serif;font-weight:bold">PAYMENT TERMS</div>
<div class="t" style="left:778.00px;top:330.98px;transform:scaleX(1.0524);transform-origin:0 0;font-size:6px;color:#222;font-family:'Liberation Serif',serif;font-weight:bold">DUE DATE</div>
<div class="t" style="left:715.00px;top:343.67px;transform:scaleX(1.0551);transform-origin:0 0;font-size:6.3px;color:#3a3a3a">Due on Receipt</div>
<div class="t" style="left:517.00px;top:365.58px;transform:scaleX(1.0203);transform-origin:0 0;font-size:6px;color:#222;font-family:'Liberation Serif',serif;font-weight:bold">QUANTITY</div>
<div class="t" style="left:565.00px;top:365.58px;transform:scaleX(1.0075);transform-origin:0 0;font-size:6px;color:#222;font-family:'Liberation Serif',serif;font-weight:bold">DESCRIPTION</div>
<div class="t" style="left:715.00px;top:365.58px;transform:scaleX(1.0153);transform-origin:0 0;font-size:6px;color:#222;font-family:'Liberation Serif',serif;font-weight:bold">UNIT PRICE</div>
<div class="t" style="left:778.00px;top:365.58px;transform:scaleX(1.0133);transform-origin:0 0;font-size:6px;color:#222;font-family:'Liberation Serif',serif;font-weight:bold">LINE TOTAL</div>
<div class="t" style="left:737.60px;top:554.00px;letter-spacing:1.375px;font-size:5.6px;color:#222;font-weight:bold">Subtotal</div>
<div class="t" style="left:733.60px;top:564.00px;letter-spacing:1.324px;font-size:5.6px;color:#222;font-weight:bold">Sales Tax</div>
<div class="t" style="left:750.00px;top:575.00px;letter-spacing:1.662px;font-size:5.6px;color:#222;font-weight:bold">Total</div>
<div class="t" style="left:518.60px;top:619.00px;letter-spacing:0.498px;font-size:6.4px;color:#858585;-webkit-text-stroke:0.2px #858585;transform:scaleX(.82);transform-origin:0 0">YOUR LOGO</div>
<div class="t" style="left:528.00px;top:626.00px;letter-spacing:0.578px;font-size:6.4px;color:#858585;-webkit-text-stroke:0.2px #858585;transform:scaleX(.82);transform-origin:0 0">HERE</div>
<div class="t" style="left:567.20px;top:629.67px;transform:scaleX(1.0700);transform-origin:0 0;font-size:6.3px;color:#7a7a7a;font-style:italic">Your company slogan</div>
<div class="t" style="right:535.80px;top:622.67px;transform:scaleX(1.0713);transform-origin:100% 0;font-size:6.3px;color:#8a8a8a">Make all checks payable to Your Company Name</div>
<div class="t" style="left:720.00px;top:631.98px;transform:scaleX(1.0271);transform-origin:0 0;font-size:6px;color:#6a6a6a;font-family:'Liberation Serif',serif;font-weight:bold">THANK YOU FOR YOUR BUSINESS!</div>
<div id="status"></div>
<div class="abs" style="left:1107px;top:707px;width:38px;height:19px;background:#c6c6c6"></div>
<div class="t" style="left:3.40px;top:711.00px;letter-spacing:-0.163px;font-size:11.2px;color:#555">Page 1 of 1</div>
<div class="t" style="left:79.40px;top:711.00px;letter-spacing:0.113px;font-size:11.2px;color:#555">51 words</div>
<div class="t" style="left:176.40px;top:711.00px;letter-spacing:0.026px;font-size:11.2px;color:#555">English (United States)</div>
<div class="t" style="left:1326.60px;top:711.00px;letter-spacing:-1.003px;font-size:11.2px;color:#555">50%</div>
<svg style="left:145px;top:710px" width="15" height="13" viewBox="0 0 15 13"><path d="M6.5 1.6C5 0.6 2.6 0.5 0.6 0.8V10.4C2.6 10.1 5 10.2 6.5 11.2M6.5 1.6V12.6M6.5 1.6C7.6 0.8 9.4 0.5 11.4 0.7V3" fill="none" stroke="#666" stroke-width="1"/><path d="M6.5 11.2C7.6 10.4 9.6 10.2 11.4 10.4V8.6" fill="none" stroke="#666" stroke-width="1"/><path d="M8.4 5.8L10.2 7.8L13.8 3.4" fill="none" stroke="#666" stroke-width="1.1"/></svg><svg style="left:1081px;top:710px" width="14" height="13" viewBox="0 0 14 13"><path d="M6.8 1.6C5.2 0.6 2.6 0.5 0.6 0.8V10.6C2.6 10.3 5.2 10.4 6.8 11.4C8.4 10.4 11 10.3 13 10.6V0.8C11 0.5 8.4 0.6 6.8 1.6zM6.8 1.6V12.8" fill="none" stroke="#666" stroke-width="1"/><path d="M2 3.4h3.4M2 5.4h3.4M2 7.4h3.4M8.2 3.4h3.4M8.2 5.4h3.4M8.2 7.4h3.4" stroke="#777" stroke-width="1" fill="none"/></svg><svg style="left:1119px;top:710px" width="14" height="13" viewBox="0 0 14 13"><rect x="0.5" y="0.5" width="13" height="12" fill="#f4f4f4" stroke="#555" stroke-width="1"/><path d="M2.4 3.5h9.2M2.4 5.5h9.2M2.4 7.5h9.2M2.4 9.5h9.2" stroke="#555" stroke-width="1" fill="none"/></svg><svg style="left:1157px;top:710px" width="15" height="14" viewBox="0 0 15 14"><path d="M7 10.5H0.5V0.5H11.5V5.6" fill="none" stroke="#666" stroke-width="1"/><path d="M2.4 3.5h7.2M2.4 5.5h6M2.4 7.5h4" stroke="#777" stroke-width="1" fill="none"/><circle cx="10.6" cy="9.6" r="3.7" fill="#666"/><path d="M8.6 8.4C9.6 7.6 11 8.6 10.4 9.8C9.8 10.8 11.6 10.8 12.4 11.6" stroke="#f1f1f1" stroke-width="0.9" fill="none"/></svg><div class="abs" style="left:1188px;top:716px;width:6px;height:2px;background:#555"></div><div class="abs" style="left:1198px;top:716px;width:100px;height:1px;background:#8e8e8e"></div><div class="abs" style="left:1248px;top:713px;width:1px;height:7px;background:#8e8e8e"></div><div class="abs" style="left:1220px;top:711px;width:4px;height:11px;background:#555"></div><div class="abs" style="left:1302px;top:716px;width:8px;height:2px;background:#555"></div><div class="abs" style="left:1305px;top:713px;width:2px;height:8px;background:#555"></div>
</div>
</body>
</html>
